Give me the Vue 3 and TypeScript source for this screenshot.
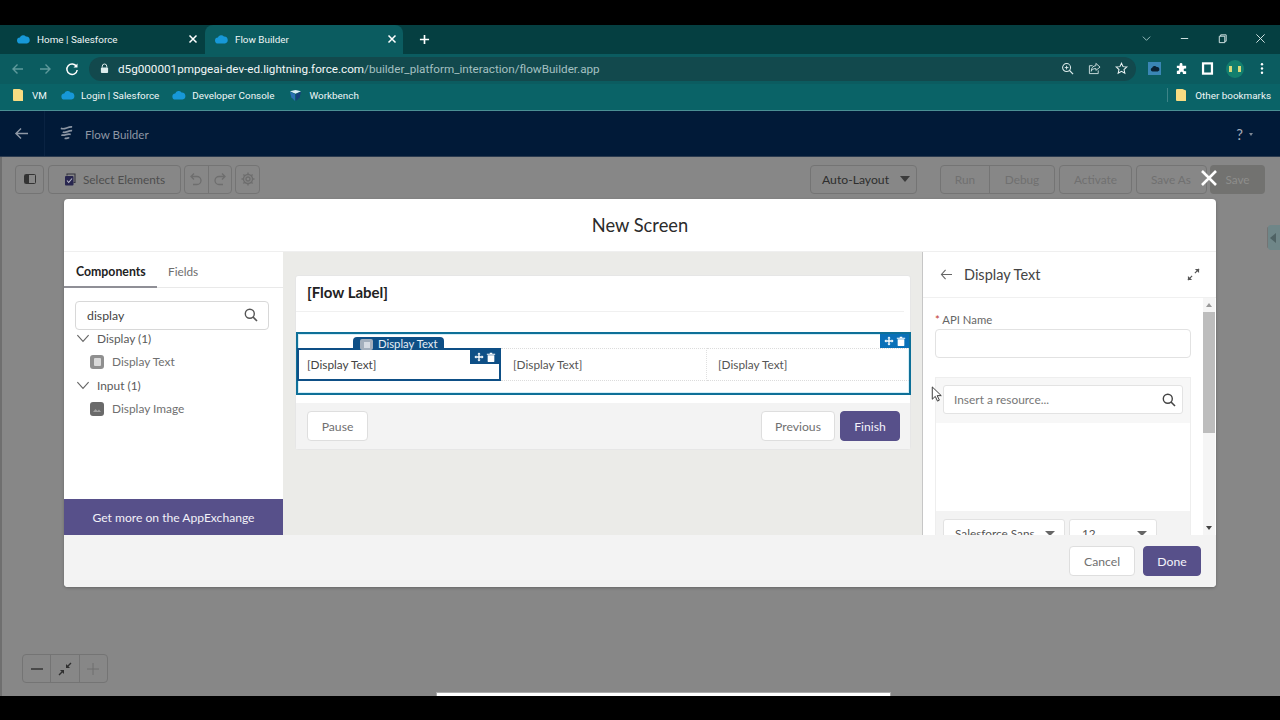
<script setup lang="ts">
const bookmarks = [
  { label: 'Login | Salesforce', kind: 'cloud' },
  { label: 'Developer Console', kind: 'cloud' },
  { label: 'Workbench', kind: 'cube' },
]
</script>

<template>
  <div class="screen">
    <div class="letterbox"></div>

    <div class="tabstrip">
      <div class="tab tab-inactive">
        <svg class="fav" viewBox="0 0 16 12"><path d="M4 11.500a3.700 3.700 0 0 1-.5-7.400A4.300 4.300 0 0 1 11 3a4.300 4.300 0 0 1 1.200 8.500z" fill="#1798d8"/></svg>
        <span class="tab-title">Home | Salesforce</span>
        <svg class="tab-x" viewBox="0 0 10 10"><path d="M1.500 1.500l7 7M8.500 1.500l-7 7" stroke="#fff" stroke-width="1.500"/></svg>
      </div>
      <div class="tab tab-active">
        <svg class="fav" viewBox="0 0 16 12"><path d="M4 11.500a3.700 3.700 0 0 1-.5-7.400A4.300 4.300 0 0 1 11 3a4.300 4.300 0 0 1 1.200 8.500z" fill="#1798d8"/></svg>
        <span class="tab-title">Flow Builder</span>
        <svg class="tab-x" viewBox="0 0 10 10"><path d="M1.500 1.500l7 7M8.500 1.500l-7 7" stroke="#fff" stroke-width="1.500"/></svg>
      </div>
      <svg class="new-tab" viewBox="0 0 12 12"><path d="M6 1v10M1 6h10" stroke="#fff" stroke-width="1.800"/></svg>
      <div class="spacer"></div>
      <div class="win-controls">
        <svg viewBox="0 0 12 12" class="win-chev"><path d="M2 4l4 4 4-4" fill="none" stroke="#9fc4c4" stroke-width="1"/></svg>
        <svg viewBox="0 0 12 12" class="win-btn"><path d="M2 6h8" stroke="#dfeeee" stroke-width="1"/></svg>
        <svg viewBox="0 0 12 12" class="win-btn"><path d="M2.500 3.500h6v7h-6zM4 3.500V2h6v7H8.500" fill="none" stroke="#dfeeee" stroke-width="1"/></svg>
        <svg viewBox="0 0 12 12" class="win-btn"><path d="M1.500 1.500l9 9M10.500 1.500l-9 9" stroke="#dfeeee" stroke-width="1"/></svg>
      </div>
    </div>

    <div class="toolbar">
      <svg class="nav dim" viewBox="0 0 14 14"><path d="M12 7H2M6.500 2.500L2 7l4.500 4.500" fill="none" stroke="#5f9a9c" stroke-width="1.400"/></svg>
      <svg class="nav dim" viewBox="0 0 14 14"><path d="M2 7h10M7.500 2.500L12 7l-4.500 4.500" fill="none" stroke="#5f9a9c" stroke-width="1.400"/></svg>
      <svg class="nav" viewBox="0 0 14 14"><path d="M11.500 4.500A5.200 5.200 0 1 0 12.200 8" fill="none" stroke="#fff" stroke-width="1.500"/><path d="M12.500 1.500v4h-4z" fill="#fff"/></svg>
      <div class="omnibox">
        <svg class="lock" viewBox="0 0 10 12"><path d="M2.500 5V3.500a2.500 2.500 0 0 1 5 0V5" fill="none" stroke="#dcecec" stroke-width="1.100"/><rect x="1" y="5" width="8" height="6" rx="1" fill="#dcecec"/></svg>
        <span class="url-strong">d5g000001pmpgeai-dev-ed.lightning.force.com</span><span class="url-dim">/builder_platform_interaction/flowBuilder.app</span>
        <div class="spacer"></div>
        <svg class="omni-icon" viewBox="0 0 14 14"><circle cx="6" cy="6" r="4.300" fill="none" stroke="#dcecec" stroke-width="1.100"/><path d="M9.200 9.200L13 13" stroke="#dcecec" stroke-width="1.300"/><path d="M6 4v4M4 6h4" stroke="#dcecec"/></svg>
        <svg class="omni-icon" viewBox="0 0 14 14"><path d="M8.500 1.500L13 5.500 8.500 9V7C5.500 7 4 8.500 3.500 10 3.500 6.500 5.500 4 8.500 4zM11 9v3.500H1.500V4H5" fill="none" stroke="#cfe2e2" stroke-width="1"/></svg>
        <svg class="omni-icon" viewBox="0 0 14 14"><path d="M7 1.300l1.700 3.700 4 .4-3 2.700.9 4L7 10 3.400 12.100l.9-4-3-2.700 4-.4z" fill="none" stroke="#eef6f6" stroke-width="1.100"/></svg>
      </div>
      <div class="ext-row">
        <div class="ext-cloud"><svg viewBox="0 0 12 8"><path d="M3 7.500a2.300 2.300 0 0 1-.4-4.500A3 3 0 0 1 8 2.300 2.600 2.600 0 0 1 9.300 7.500z" fill="#0a2233"/></svg></div>
        <svg class="ext-icon" viewBox="0 0 14 14"><path d="M5 2.500a1.500 1.500 0 0 1 3 0V4h4v3h-1.200a1.500 1.500 0 0 0 0 3H12v3H8.500v-1a1.500 1.500 0 0 0-3 0v1H2V9.500h1a1.500 1.500 0 0 0 0-3H2V4h3z" fill="#fff"/></svg>
        <svg class="ext-icon" viewBox="0 0 14 14"><rect x="2.200" y="1.500" width="9.600" height="11" fill="none" stroke="#fff" stroke-width="2.400"/></svg>
        <div class="avatar"><i></i><i></i></div>
        <svg class="ext-menu" viewBox="0 0 4 14"><circle cx="2" cy="2.500" r="1.300" fill="#fff"/><circle cx="2" cy="7" r="1.300" fill="#fff"/><circle cx="2" cy="11.500" r="1.300" fill="#fff"/></svg>
      </div>
    </div>

    <div class="bookmarks">
      <div class="bm bm-vm">
        <svg class="folder" viewBox="0 0 10 13"><path d="M0 1.500Q0 .5 1 .5h5.500L10 2v10.500H1q-1 0-1-1z" fill="#f8dc82"/></svg>
        <span>VM</span>
      </div>
      <div v-for="b in bookmarks" :key="b.label" class="bm">
        <svg v-if="b.kind === 'cloud'" class="fav" viewBox="0 0 16 12"><path d="M4 11.500a3.700 3.700 0 0 1-.5-7.400A4.300 4.300 0 0 1 11 3a4.300 4.300 0 0 1 1.200 8.500z" fill="#1798d8"/></svg>
        <svg v-else class="cube" viewBox="0 0 14 14"><path d="M1 2.500L7 1l6 1.500L7 5z" fill="#d9edf7"/><path d="M1 3l5.500 2.500V13L2.500 9z" fill="#2b6fb3"/><path d="M13 3L7.500 5.500V13l4-4z" fill="#173f7c"/></svg>
        <span>{{ b.label }}</span>
      </div>
      <div class="spacer"></div>
      <div class="bm-sep"></div>
      <div class="bm bm-other">
        <svg class="folder" viewBox="0 0 10 13"><path d="M0 1.500Q0 .5 1 .5h5.500L10 2v10.500H1q-1 0-1-1z" fill="#f8dc82"/></svg>
        <span>Other bookmarks</span>
      </div>
    </div>

    <div class="app-header">
      <svg class="hdr-back" viewBox="0 0 16 14"><path d="M15 7H2M7.500 1.500L2 7l5.500 5.500" fill="none" stroke="#8f99a6" stroke-width="1.500"/></svg>
      <div class="hdr-divider"></div>
      <svg class="hdr-logo" viewBox="0 0 16 18"><path d="M2 3.500C6 5.500 9 1.500 14 2M4 7.500C7 9 10 5.500 14 6M2.500 10.500C6 12 9 8.500 12.500 10M6 14c2 .8 3-.5 5-.5" fill="none" stroke="#8b95a3" stroke-width="1.800"/></svg>
      <span class="hdr-title">Flow Builder</span>
      <div class="spacer"></div>
      <span class="hdr-help">?</span>
      <span class="hdr-caret"></span>
    </div>

    <div class="page">
      <div class="page-edge"></div>
      <div class="bar">
        <div class="btn btn-icon">
          <svg viewBox="0 0 12 10" class="i12"><rect x=".5" y=".5" width="11" height="9" rx="1" fill="none" stroke="#333" stroke-width="1"/><rect x="1" y="1" width="4" height="8" fill="#333"/></svg>
        </div>
        <div class="btn btn-select">
          <svg viewBox="0 0 12 13" class="i13"><path d="M3 2.500V1h8v8.500H9.500" fill="none" stroke="#33333f" stroke-width="1.100"/><rect x="1" y="3" width="8.500" height="9.500" rx="1" fill="#28264f"/><path d="M3 7.500l1.700 2L8 5.500" fill="none" stroke="#b8b8c8" stroke-width="1.100"/></svg>
          <span>Select Elements</span>
        </div>
        <div class="btn-group undo">
          <div class="seg"><svg viewBox="0 0 14 14" class="i14"><path d="M5 1.500L2 4.500 5 7.500M2.500 4.500H8a4 4 0 0 1 0 8H4" fill="none" stroke="#6e6e6e" stroke-width="1.300"/></svg></div>
          <div class="seg"><svg viewBox="0 0 14 14" class="i14"><path d="M9 1.500L12 4.500 9 7.500M11.500 4.500H6a4 4 0 0 0 0 8h4" fill="none" stroke="#6e6e6e" stroke-width="1.300"/></svg></div>
        </div>
        <div class="btn btn-icon gear">
          <svg viewBox="0 0 14 14" class="i14"><circle cx="7" cy="7" r="2" fill="none" stroke="#6e6e6e" stroke-width="1.400"/><circle cx="7" cy="7" r="4.500" fill="none" stroke="#6e6e6e" stroke-width="1.400"/><path d="M7 .5v2.500M7 11v2.500M.5 7H3M11 7h2.500M2.400 2.400l1.800 1.800M9.800 9.800l1.800 1.800M2.400 11.600l1.800-1.800M9.800 4.200l1.800-1.800" stroke="#6e6e6e" stroke-width="1.400"/></svg>
        </div>
        <div class="spacer"></div>
        <div class="btn btn-auto"><span>Auto-Layout</span><i class="caret"></i></div>
        <div class="btn-group run">
          <div class="seg seg-run">Run</div>
          <div class="seg seg-debug">Debug</div>
        </div>
        <div class="btn btn-text activate">Activate</div>
        <div class="btn btn-text saveas">Save As</div>
        <div class="btn-save">Save</div>
      </div>

      <div class="zoom-group">
        <div class="zseg"><svg viewBox="0 0 14 14" class="i14"><path d="M1 7h12" stroke="#2f2f2f" stroke-width="1.400"/></svg></div>
        <div class="zseg"><svg viewBox="0 0 14 14" class="i14"><path d="M13 1L9 5M1 13l4-4" stroke="#2f2f2f" stroke-width="1.400"/><path d="M8 2v4h4zM2 8h4v4z" fill="#2f2f2f"/></svg></div>
        <div class="zseg"><svg viewBox="0 0 14 14" class="i14"><path d="M1 7h12M7 1v12" stroke="#6e6e6e" stroke-width="1"/></svg></div>
      </div>

      <div class="modal-close">
        <svg viewBox="0 0 18 18"><path d="M2 2l14 14M16 2L2 16" stroke="#fff" stroke-width="2.600"/></svg>
      </div>

      <section class="modal">
        <header class="modal-head">New Screen</header>
        <div class="modal-body">
          <aside class="palette">
            <div class="tabs">
              <div class="ptab ptab-on">Components</div>
              <div class="ptab">Fields</div>
            </div>
            <div class="search">
              <span>display</span>
              <svg viewBox="0 0 14 14" class="i14"><circle cx="5.800" cy="5.800" r="4.500" fill="none" stroke="#555" stroke-width="1.400"/><path d="M9 9l4 4" stroke="#555" stroke-width="1.600"/></svg>
            </div>
            <div class="tree">
              <div class="tree-head">
                <svg viewBox="0 0 12 8" class="chev"><path d="M1 1l5 5.500L11 1" fill="none" stroke="#666" stroke-width="1"/></svg>
                <span>Display (1)</span>
              </div>
              <div class="tree-item">
                <span class="tile tile-text"><i></i></span>
                <span>Display Text</span>
              </div>
              <div class="tree-head">
                <svg viewBox="0 0 12 8" class="chev"><path d="M1 1l5 5.500L11 1" fill="none" stroke="#666" stroke-width="1"/></svg>
                <span>Input (1)</span>
              </div>
              <div class="tree-item">
                <span class="tile tile-image"><svg viewBox="0 0 14 14"><path d="M3 10l2.500-3 2 2 1.500-1.500L11 10z" fill="#a0a0a0"/></svg></span>
                <span>Display Image</span>
              </div>
            </div>
            <div class="spacer"></div>
            <div class="appex">Get more on the AppExchange</div>
          </aside>

          <main class="canvas">
            <div class="screen-card">
              <div class="card-title">[Flow Label]</div>
              <div class="section-wrap">
                <div class="section">
                  <div class="sec-tools">
                    <svg viewBox="0 0 12 12" class="tool"><path d="M6 .5l2 2.200H6.800v2.500h2.500V4l2.200 2-2.200 2V6.800H6.800v2.500H8l-2 2.200-2-2.200h1.200V6.800H2.700V8L.5 6l2.200-2v1.200h2.500V2.700H4z" fill="#fff"/></svg>
                    <svg viewBox="0 0 12 12" class="tool"><path d="M4.500 1h3v1H11v1.300H1V2h3.500zM2 4h8v7a1 1 0 0 1-1 1H3a1 1 0 0 1-1-1z" fill="#fff"/></svg>
                  </div>
                  <div class="column col-selected">
                    <div class="col-badge">
                      <span class="badge-ic"><i></i></span>
                      <span class="badge-txt">Display Text</span>
                    </div>
                    <div class="col-tools">
                      <svg viewBox="0 0 12 12" class="tool"><path d="M6 .5l2 2.200H6.800v2.500h2.500V4l2.200 2-2.200 2V6.800H6.800v2.500H8l-2 2.200-2-2.200h1.200V6.800H2.700V8L.5 6l2.200-2v1.200h2.500V2.700H4z" fill="#fff"/></svg>
                      <svg viewBox="0 0 12 12" class="tool"><path d="M4.500 1h3v1H11v1.300H1V2h3.500zM2 4h8v7a1 1 0 0 1-1 1H3a1 1 0 0 1-1-1z" fill="#fff"/></svg>
                    </div>
                    <span>[Display Text]</span>
                  </div>
                  <div class="column col-mid"><span>[Display Text]</span></div>
                  <div class="column col-last"><span>[Display Text]</span></div>
                </div>
              </div>
              <div class="card-foot">
                <div class="fbtn pause">Pause</div>
                <div class="spacer"></div>
                <div class="fbtn prev">Previous</div>
                <div class="fbtn brand">Finish</div>
              </div>
            </div>
          </main>

          <aside class="props">
            <div class="props-head">
              <svg viewBox="0 0 14 12" class="props-back"><path d="M13 6H1.500M6 1L1.500 6 6 11" fill="none" stroke="#666" stroke-width="1.200"/></svg>
              <span class="props-title">Display Text</span>
              <div class="spacer"></div>
              <svg viewBox="0 0 14 14" class="props-exp"><path d="M13 1L8.500 5.500M1 13l4.500-4.500" stroke="#555" stroke-width="1.300"/><path d="M8.500 1H13v4.500zM1 8.500V13h4.500z" fill="#555"/></svg>
            </div>
            <div class="props-main">
              <div class="props-scroll">
                <label class="api"><span class="req">*</span> API Name</label>
                <div class="api-input"></div>
                <div class="rte">
                  <div class="rte-search-row">
                    <div class="rte-search">
                      <span>Insert a resource...</span>
                      <svg viewBox="0 0 14 14" class="i14"><circle cx="5.800" cy="5.800" r="4.500" fill="none" stroke="#444" stroke-width="1.400"/><path d="M9 9l4 4" stroke="#444" stroke-width="1.600"/></svg>
                    </div>
                  </div>
                  <div class="rte-area"></div>
                  <div class="rte-tools">
                    <div class="sel sel-font"><span>Salesforce Sans</span><i class="caret"></i></div>
                    <div class="sel sel-size"><span>12</span><i class="caret"></i></div>
                  </div>
                </div>
              </div>
              <div class="scrollbar">
                <i class="sb-up"></i>
                <div class="sb-track"><div class="sb-thumb"></div></div>
                <i class="sb-down"></i>
              </div>
            </div>
          </aside>
        </div>
        <footer class="modal-foot">
          <div class="fbtn cancel">Cancel</div>
          <div class="fbtn brand done">Done</div>
        </footer>
      </section>

      <svg class="cursor" viewBox="0 0 12 18"><path d="M1 1v13l3.200-3 2.300 5 2-1-2.300-4.800H10.500z" fill="#fff" stroke="#333" stroke-width="1"/></svg>
      <div class="right-tab"><i></i></div>
      <div class="progress"></div>
    </div>

    <div class="letterbox-bottom"></div>
  </div>
</template>

<style>
html, body { margin: 0; background: #000; }
</style>

<style scoped>
.screen { width: 1280px; height: 720px; display: flex; flex-direction: column; overflow: hidden; background: #000; font-family: Lato, "Open Sans", sans-serif; }
.letterbox { height: 25px; background: #000; flex: none; }
.letterbox-bottom { height: 24px; background: #000; flex: none; }
.spacer { flex: 1; }

.tabstrip { height: 29px; flex: none; display: flex; align-items: center; background: #053f41; color: #f0f6f6; font-family: Roboto, sans-serif; font-size: 9.900px; }
.tab { height: 100%; display: flex; align-items: center; box-sizing: border-box; }
.tab-inactive { width: 205px; padding: 0 7px 1px 17px; }
.tab-active { width: 198px; background: #0b5c60; border-radius: 8px 8px 0 0; padding: 0 6px 1px 10px; }
.tab .fav { margin-right: 7px; }
.tab-title { flex: 1; white-space: nowrap; }
.tab-x { width: 10px; height: 10px; }
.new-tab { width: 11px; height: 11px; margin-left: 16px; }
.win-controls { display: flex; align-items: center; padding: 0 14px 3px 0; }
.win-chev { width: 11px; height: 11px; margin-right: 27px; }
.win-btn { width: 11px; height: 11px; margin-left: 27px; }
.win-chev + .win-btn { margin-left: 0; }
.fav { width: 13px; height: 10px; flex: none; }

.toolbar { height: 30px; flex: none; display: flex; align-items: center; background: #0b5c60; padding: 0 0 1px 11px; box-sizing: border-box; }
.nav { width: 14px; height: 14px; margin-right: 13px; flex: none; }
.omnibox { width: 1047px; height: 24px; margin-left: -3px; border-radius: 12px; background: #12494d; display: flex; align-items: center; box-sizing: border-box; padding: 0 8px 0 11px; font-family: Roboto, sans-serif; font-size: 11.700px; white-space: nowrap; flex: none; }
.lock { width: 9px; height: 11px; margin-right: 9px; flex: none; }
.url-strong { color: #f1f7f7; }
.url-dim { color: #a4c0c1; }
.omni-icon { width: 13px; height: 13px; margin-left: 14px; flex: none; }
.ext-row { display: flex; align-items: center; margin-left: 12px; }
.ext-cloud { width: 13px; height: 13px; background: #3a86b5; display: flex; align-items: center; justify-content: center; }
.ext-cloud svg { width: 10px; height: 7px; }
.ext-icon { width: 13px; height: 13px; margin-left: 14px; flex: none; }
.ext-icon + .ext-icon { margin-left: 13px; }
.avatar { width: 18px; height: 18px; border-radius: 50%; background: #127f6e; margin-left: 12px; display: flex; align-items: center; justify-content: space-between; padding: 0 3px; box-sizing: border-box; }
.avatar i { width: 3px; height: 6px; background: #d9d97a; }
.ext-menu { width: 4px; height: 13px; margin-left: 16px; flex: none; }

.bookmarks { height: 27px; flex: none; display: flex; align-items: center; background: #0a6367; border-bottom: 1px solid #4a8f94; box-sizing: border-box; padding: 0 9px 4px 13px; font-family: Roboto, sans-serif; font-size: 9.900px; color: #f1f7f7; white-space: nowrap; }
.bm { display: flex; align-items: center; margin-right: 13px; }
.bm-vm { width: 35px; margin-right: 13px; }
.bm:nth-child(3) { margin-right: 15px; }
.bm .fav { width: 14px; margin-right: 6px; }
.folder { width: 10px; height: 14px; margin-right: 9px; flex: none; }
.cube { width: 13px; height: 13px; margin-right: 7px; flex: none; }
.bm-sep { width: 1px; height: 14px; background: #3d8488; margin-right: 8px; }
.bm-other { margin-right: 0; }
.bm-other .folder { margin-right: 9px; }

.app-header { height: 46px; flex: none; display: flex; align-items: center; background: #011a38; border-bottom: 1px solid #2a3a4f; box-sizing: border-box; color: #8e97a4; font-size: 11.600px; position: relative; }
.hdr-back { width: 15px; height: 13px; margin-left: 14px; flex: none; }
.hdr-divider { width: 1px; height: 100%; background: #0a2342; margin-left: 15px; }
.hdr-logo { width: 15px; height: 17px; margin-left: 14px; flex: none; }
.hdr-title { margin-left: 11px; padding-top: 1px; }
.hdr-help { font-size: 15px; color: #a3acb8; }
.hdr-caret { width: 0; height: 0; border: 2px solid transparent; border-top: 3px solid #7d8794; margin: 3px 27px 0 6px; }

.page { flex: 1; position: relative; background: #878787; box-sizing: border-box; }
.page-edge { position: absolute; left: 0; top: 0; bottom: 0; width: 2px; background: #6f6f6f; }
.bar { height: 44px; display: flex; align-items: center; padding: 0 15px; box-sizing: border-box; color: #5e5e5e; font-size: 11.800px; }
.btn, .btn-group, .zoom-group { border: 1px solid #747474; border-radius: 4px; box-sizing: border-box; height: 29px; }
.btn { display: flex; align-items: center; justify-content: center; flex: none; }
.btn-icon { width: 29px; }
.btn-select { width: 133px; margin-left: 4px; gap: 7px; color: #4e4e4e; justify-content: flex-start; padding-left: 15px; }
.btn-group { display: flex; flex: none; }
.undo { margin-left: 3px; width: 48px; }
.undo .seg { width: 50%; display: flex; align-items: center; justify-content: center; }
.undo .seg + .seg { border-left: 1px solid #747474; }
.gear { margin-left: 3px; width: 25px; }
.btn-auto { width: 107px; gap: 11px; color: #2e2e2e; font-size: 12.200px; justify-content: flex-start; padding-left: 11px; }
.run { margin-left: 23px; width: 115px; color: #707070; }
.seg-run { width: 48px; border-right: 1px solid #747474; display: flex; align-items: center; justify-content: center; }
.seg-debug { flex: 1; display: flex; align-items: center; justify-content: center; }
.btn-text { color: #707070; }
.activate { width: 73px; margin-left: 4px; }
.saveas { width: 71px; margin-left: 4px; justify-content: flex-start; padding-left: 14px; }
.btn-save { width: 55px; height: 29px; flex: none; margin-left: 3px; background: #727270; color: #8e8e8c; border-radius: 4px; display: flex; align-items: center; justify-content: center; }
.caret { width: 0; height: 0; border: 5px solid transparent; border-top: 6px solid #3c3c3c; border-bottom: 0; flex: none; }
.i12 { width: 12px; height: 10px; }
.i13 { width: 12px; height: 13px; }
.i14 { width: 14px; height: 14px; flex: none; }
.zoom-group { position: absolute; left: 22px; top: 497px; width: 86px; display: flex; }
.zseg { flex: 1; display: flex; align-items: center; justify-content: center; }
.zseg + .zseg { border-left: 1px solid #747474; }

.modal-close { position: absolute; left: 1200px; top: 12px; width: 18px; height: 18px; z-index: 3; }
.modal-close svg { width: 18px; height: 18px; display: block; }

.modal { position: absolute; left: 64px; top: 42px; width: 1152px; height: 388px; display: flex; flex-direction: column; border-radius: 4px; overflow: hidden; background: #fff; box-shadow: 0 1px 3px rgba(0,0,0,.25); }
.modal-head { height: 53px; flex: none; display: flex; align-items: center; justify-content: center; font-size: 18.300px; color: #2b2b2b; border-bottom: 1px solid #efefef; box-sizing: border-box; }
.modal-body { flex: 1; display: flex; min-height: 0; }
.modal-foot { height: 52px; flex: none; background: #f3f3f3; display: flex; justify-content: flex-end; align-items: center; padding: 0 15px 0 0; gap: 8px; }

.palette { width: 219px; flex: none; display: flex; flex-direction: column; color: #5b5b5b; font-size: 11.900px; background: #fff; }
.tabs { display: flex; height: 36px; border-bottom: 1px solid #e9e9e9; box-sizing: border-box; flex: none; }
.ptab { padding: 0 11px; line-height: 40px; color: #6e6e6e; font-size: 11.800px; }
.ptab-on { width: 93px; box-sizing: border-box; padding: 0 0 0 12px; color: #222; font-weight: 700; font-size: 12.300px; box-shadow: inset 0 -2px 0 #8f8f96; height: 36px; }
.search { margin: 13px 14px 0 11px; height: 29px; border: 1px solid #d8d8d8; border-radius: 4px; display: flex; align-items: center; justify-content: space-between; padding: 0 10px 1px 11px; box-sizing: border-box; color: #444; font-size: 12.300px; flex: none; }
.tree { display: flex; flex-direction: column; margin: -2px 0 0 12px; }
.tree-head { height: 20px; display: flex; align-items: center; gap: 7px; }
.tree-head span { color: #5a5a5a; }
.tree-item { height: 27px; display: flex; align-items: center; gap: 8px; margin-left: 14px; color: #6f6f6f; }
.chev { width: 14px; height: 9px; flex: none; }
.tile { width: 14px; height: 14px; border-radius: 3px; display: flex; align-items: center; justify-content: center; flex: none; }
.tile svg { width: 14px; height: 14px; }
.tile-text { background: #8f8f8f; }
.tile-text i { width: 7px; height: 8px; background: #d9d9d9; border-radius: 1px; }
.tile-image { background: #6a6a6a; }
.appex { height: 36px; flex: none; background: #57508a; color: #f2f1f8; font-size: 12.100px; display: flex; align-items: center; justify-content: center; }

.canvas { flex: 1; min-width: 0; background: #ebebe8; padding: 23px 11px 0 12px; box-sizing: border-box; border-right: 1px solid #c6c6c6; }
.screen-card { background: #fff; border: 1px solid #e6e6e6; border-radius: 3px; height: 175px; display: flex; flex-direction: column; box-sizing: border-box; width: 616px; }
.card-title { height: 36px; padding-left: 11px; font-size: 15px; font-weight: 700; line-height: 32px; color: #222; flex: none; margin: 0 6px 0 0; border-bottom: 1px solid #f0f0f0; box-sizing: border-box; }
.section-wrap { height: 91px; flex: none; padding-top: 20px; box-sizing: border-box; }
.section { position: relative; height: 63px; width: 615px; box-sizing: border-box; border: 2px solid #0e7098; box-shadow: inset 0 0 0 1px #d4eef8; background: #fff; display: flex; padding-top: 14px; font-size: 11.800px; color: #555; }
.sec-tools { position: absolute; right: 0; top: 0; width: 29px; height: 14px; background: #0a70b8; display: flex; align-items: center; justify-content: center; gap: 2px; }
.tool { width: 10px; height: 10px; flex: none; }
.column { height: 33px; display: flex; align-items: center; box-sizing: border-box; border-top: 1px dotted #dcdcdc; border-bottom: 1px dotted #dcdcdc; padding: 0 0 1px 11px; }
.col-selected { width: 204px; position: relative; border: 2px solid #0e4f86; padding-left: 8px; margin-left: -1px; color: #444; }
.col-mid { width: 206px; padding-left: 12px; border-right: 1px dotted #e0e0e0; }
.col-last { flex: 1; padding-left: 11px; }
.col-badge { position: absolute; left: 54px; top: -13px; width: 91px; height: 13px; border-radius: 4px 4px 0 0; background: #0e4f86; display: flex; align-items: flex-start; overflow: hidden; color: #e6eef5; font-size: 11.300px; z-index: 1; }
.badge-ic { width: 13px; height: 11px; background: #a3afbc; margin: 2px 5px 0 7px; border-radius: 2px; flex: none; display: flex; align-items: center; justify-content: center; }
.badge-ic i { width: 6px; height: 6px; background: #d5dbe2; }
.badge-txt { line-height: 14px; white-space: nowrap; }
.col-tools { position: absolute; right: -1px; top: -1px; width: 30px; height: 15px; background: #0e4f86; display: flex; align-items: center; justify-content: center; gap: 2px; }
.card-foot { flex: 1; background: #f3f3f3; display: flex; align-items: center; padding: 0 10px 0 11px; gap: 5px; }
.fbtn { height: 30px; border: 1px solid #dedede; border-radius: 4px; background: #fff; color: #707070; font-size: 12.200px; display: flex; align-items: center; justify-content: center; box-sizing: border-box; flex: none; }
.pause { width: 61px; }
.prev { width: 74px; }
.brand { background: #57508a; border-color: #57508a; color: #f4f3fa; width: 60px; }

.props { width: 293px; flex: none; display: flex; flex-direction: column; background: #fff; min-height: 0; overflow: hidden; }
.props-head { height: 46px; flex: none; display: flex; align-items: center; padding: 0 16px 0 17px; border-bottom: 1px solid #f0f0f0; box-sizing: border-box; }
.props-back { width: 13px; height: 11px; flex: none; }
.props-title { margin-left: 11px; font-size: 14.500px; color: #444; }
.props-exp { width: 13px; height: 13px; }
.props-main { flex: 1; display: flex; min-height: 0; overflow: hidden; }
.props-scroll { flex: 1; padding: 13px 0 0 12px; min-width: 0; box-sizing: border-box; overflow: hidden; }
.api { display: block; font-size: 11.300px; color: #666; height: 17px; line-height: 17px; }
.req { color: #c23934; }
.api-input { height: 29px; width: 256px; margin-top: 1px; border: 1px solid #e2e2e2; border-radius: 4px; box-sizing: border-box; }
.rte { width: 256px; margin-top: 19px; border: 1px solid #eeeeee; box-sizing: border-box; height: 220px; display: flex; flex-direction: column; }
.rte-search-row { height: 45px; background: #f7f7f7; padding: 7px 7px 0 7px; box-sizing: border-box; flex: none; }
.rte-search { height: 29px; background: #fff; border: 1px solid #e3e3e3; border-radius: 3px; box-sizing: border-box; display: flex; align-items: center; justify-content: space-between; padding: 0 6px 0 10px; font-size: 11.900px; color: #777; }
.rte-area { height: 88px; flex: none; background: #fff; }
.rte-tools { flex: 1; background: #f3f3f3; display: flex; gap: 4px; padding: 8px 0 0 7px; font-size: 11.800px; color: #555; }
.sel { height: 29px; background: #fff; border: 1px solid #e2e2e2; border-radius: 3px; display: flex; align-items: center; box-sizing: border-box; justify-content: space-between; padding: 0 9px 0 11px; }
.sel-font { width: 122px; }
.sel-size { width: 88px; padding-left: 12px; }
.sel .caret { border-width: 5px; border-top-color: #666; }
.scrollbar { width: 12px; flex: none; margin-right: 1px; background: #f5f5f5; display: flex; flex-direction: column; align-items: center; }
.sb-up { width: 0; height: 0; border: 3px solid transparent; border-bottom: 4px solid #999; border-top: 0; margin: 5px 0; flex: none; }
.sb-down { width: 0; height: 0; border: 3px solid transparent; border-top: 4px solid #444; border-bottom: 0; margin: 3px 0 5px; flex: none; }
.sb-track { flex: 1; width: 100%; }
.sb-thumb { height: 121px; background: #bdbdbd; }
.cancel { width: 66px; }
.done { width: 58px; }

.cursor { position: absolute; left: 931px; top: 229px; width: 12px; height: 17px; z-index: 4; }
.right-tab { position: absolute; right: 0; top: 68px; width: 12px; height: 25px; background: #6f8688; border-radius: 3px 0 0 3px; box-shadow: -3px 0 0 -2px #747474; display: flex; align-items: center; padding-left: 2px; box-sizing: border-box; }
.right-tab i { width: 0; height: 0; border: 5px solid transparent; border-right: 6px solid #4f6264; border-left: 0; }
.progress { position: absolute; left: 436px; bottom: 0; width: 455px; height: 4px; background: #fff; border: 1px solid #aaa; border-bottom: 0; box-sizing: border-box; }
</style>
